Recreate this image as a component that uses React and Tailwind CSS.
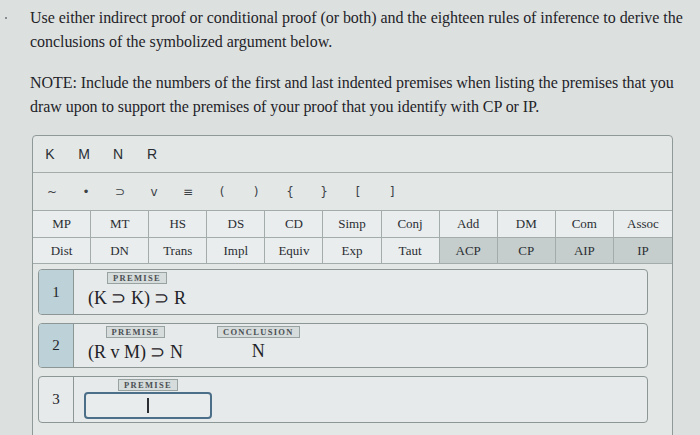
export default function App() {
  const vars = ["K", "M", "N", "R"];
  const syms = ["~", "•", "⊃", "v", "≡", "(", ")", "{", "}", "[", "]"];
  const row1 = ["MP", "MT", "HS", "DS", "CD", "Simp", "Conj", "Add", "DM", "Com", "Assoc"];
  const row2 = ["Dist", "DN", "Trans", "Impl", "Equiv", "Exp", "Taut", "ACP", "CP", "AIP", "IP"];
  const dark = ["ACP", "CP", "AIP", "IP"];
  const serif = "font-['Liberation_Serif',serif]";

  const Tag = ({ children }) => (
    <div className="border border-[#98a2a1] bg-[#d6dcdb] px-[5px] text-[8.5px] font-bold leading-[10px] tracking-[1.3px] text-[#4a4f54]">
      {children}
    </div>
  );

  return (
    <div className={`w-[700px] h-[435px] overflow-hidden bg-[#dce1e0] text-[#1f2328] ${serif}`}>
      <div className="flex pt-[6px]">
        <div className="w-[30px] pl-[5px] pt-[11px]">
          <div className="h-[2px] w-[2px] rounded-full bg-[#6b7176]" />
        </div>
        <div className="text-[16px] leading-[24px] tracking-[-0.05px]">
          <p>
            Use either indirect proof or conditional proof (or both) and the eighteen rules of inference to derive the
            <br />
            conclusions of the symbolized argument below.
          </p>
          <p className="mt-[17px]">
            NOTE: Include the numbers of the first and last indented premises when listing the premises that you
            <br />
            draw upon to support the premises of your proof that you identify with CP or IP.
          </p>
        </div>
      </div>

      <div className="ml-[32px] mt-[16px] w-[641px] h-[400px] rounded-t-[4px] border border-[#8f9998] bg-[#e3e7e6]">
        <div className="flex h-[37px] items-center border-b border-[#a3acab] font-['Liberation_Sans',sans-serif] text-[14px] text-[#2a2e33]">
          {vars.map((v) => (
            <span key={v} className="w-[34px] text-center">{v}</span>
          ))}
        </div>
        <div className="flex h-[37px] items-center pl-[2px] font-['DejaVu_Sans',sans-serif] text-[12px] text-[#3c4146]">
          {syms.map((s, i) => (
            <span key={i} className="w-[34px] text-center">{s}</span>
          ))}
        </div>
        <div className="grid grid-cols-11 border-t border-[#a3acab] text-[13px] text-[#2a2e33]">
          {row1.map((r, i) => (
            <div key={r} className={`flex h-[27px] items-center justify-center border-b border-[#a3acab] bg-[#e9eded] ${i < 10 ? "border-r" : ""}`}>
              {r}
            </div>
          ))}
          {row2.map((r, i) => (
            <div key={r} className={`flex h-[26px] items-center justify-center border-b border-[#a3acab] ${dark.includes(r) ? "bg-[#c6cecd]" : "bg-[#e9eded]"} ${i < 10 ? "border-r" : ""}`}>
              {r}
            </div>
          ))}
        </div>

        <div className="flex flex-col gap-[8px] pl-[5px] pr-[24px] pt-[5px]">
          <div className="flex h-[46px] overflow-hidden rounded-[4px] border border-[#8c9695] bg-[#e6eaea]">
            <div className="flex w-[35px] items-center justify-center border-r border-[#8c9695] bg-[#bcd2d8] text-[15px]">1</div>
            <div className="flex pl-[14px] pt-[2px]">
              <div className="flex flex-col items-center">
                <Tag>PREMISE</Tag>
                <div className="mt-[2px] text-[18px] leading-[24px] whitespace-nowrap">(K ⊃ K) ⊃ R</div>
              </div>
            </div>
          </div>

          <div className="flex h-[45px] overflow-hidden rounded-[4px] border border-[#8c9695] bg-[#e6eaea]">
            <div className="flex w-[35px] items-center justify-center border-r border-[#8c9695] bg-[#bcd2d8] text-[15px]">2</div>
            <div className="flex gap-[34px] pl-[14px] pt-[2px]">
              <div className="flex flex-col items-center">
                <Tag>PREMISE</Tag>
                <div className="mt-[2px] text-[18px] leading-[24px] whitespace-nowrap">(R v M) ⊃ N</div>
              </div>
              <div className="flex flex-col items-center">
                <Tag>CONCLUSION</Tag>
                <div className="mt-[1px] text-[18px] leading-[24px]">N</div>
              </div>
            </div>
          </div>

          <div className="flex h-[47px] overflow-hidden rounded-[4px] border border-[#8c9695] bg-[#e6eaea]">
            <div className="flex w-[35px] items-center justify-center border-r border-[#8c9695] text-[15px]">3</div>
            <div className="flex pl-[10px] pt-[2px]">
              <div className="flex flex-col items-center">
                <Tag>PREMISE</Tag>
                <div className="mt-[1px] flex h-[27px] w-[128px] items-center justify-center rounded-[4px] border-2 border-[#4b6f88] bg-[#e8ecec]">
                  <div className="h-[15px] w-[2px] bg-[#2b2f33]" />
                </div>
              </div>
            </div>
          </div>
        </div>
      </div>
    </div>
  );
}
